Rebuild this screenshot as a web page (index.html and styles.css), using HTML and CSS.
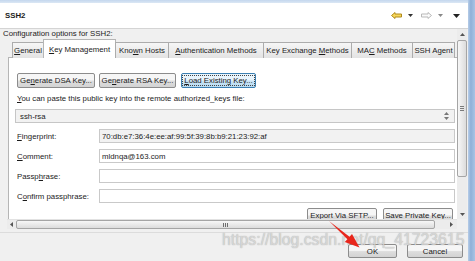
FILE: index.html
```html
<!DOCTYPE html>
<html>
	<head>
		<title>SSH2 preferences</title>
		<meta charset="utf-8">
		<link rel="stylesheet" href="styles.css">
	</head>
	<body>
		<div class="window">
			<div class="dialog">
				<div class="caption"></div>
				<div class="banner">
					<h1>SSH2</h1>
					<div class="nav">
						<svg class="back" width="11" height="7" viewBox="0 0 11 7"><polygon points="0.5,3.5 4,0.5 4,2 10.5,2 10.5,5 4,5 4,6.5" fill="#f6d75a" stroke="#b08a1c" stroke-width="1"/></svg>
						<svg class="caret" width="5" height="3" viewBox="0 0 5 3"><polygon points="0,0 5,0 2.5,3" fill="#333"/></svg>
						<svg class="fwd" width="11" height="7" viewBox="0 0 11 7"><polygon points="10.5,3.5 7,0.5 7,2 0.5,2 0.5,5 7,5 7,6.5" fill="#fafafa" stroke="#b9b9b9" stroke-width="1"/></svg>
						<svg class="caret" width="5" height="3" viewBox="0 0 5 3"><polygon points="0,0 5,0 2.5,3" fill="#888"/></svg>
						<svg class="menu" width="7" height="4" viewBox="0 0 7 4"><polygon points="0,0 7,0 3.5,4" fill="#222"/></svg>
					</div>
				</div>

				<div class="workarea">
					<div class="scroller">
						<div class="viewport">
							<p class="intro">Configuration options for SSH2:</p>
							<div class="tabfolder">
								<div class="tabs">
									<span class="tab"><span><u>G</u>eneral</span></span>
									<span class="tab active"><span><u>K</u>ey Management</span></span>
									<span class="tab"><span>Kno<u>w</u>n Hosts</span></span>
									<span class="tab"><span><u>A</u>uthentication Methods</span></span>
									<span class="tab"><span>Key Exchange <u>M</u>ethods</span></span>
									<span class="tab"><span>MA<u>C</u> Methods</span></span>
									<span class="tab"><span>SSH Agent</span></span>
								</div>
								<div class="panel">
									<div class="btnrow">
										<span class="btn dsa"><span>Ge<u>n</u>erate DSA Key...</span></span>
										<span class="btn rsa"><span>Ge<u>n</u>erate RSA Key...</span></span>
										<span class="btn load focused"><span><u>L</u>oad Existing Key...</span></span>
									</div>
									<p class="hint"><u>Y</u>ou can paste this public key into the remote authorized_keys file:</p>
									<div class="keybox">
										<span>ssh-rsa</span>
										<span class="spin">
											<svg width="5" height="3" viewBox="0 0 5 3"><polygon points="0,3 5,3 2.5,0" fill="#777"/></svg>
											<svg width="5" height="3" viewBox="0 0 5 3"><polygon points="0,0 5,0 2.5,3" fill="#777"/></svg>
										</span>
									</div>
									<div class="form">
										<label><u>F</u>ingerprint:</label>
										<div class="field ro">70:db:e7:36:4e:ee:af:99:5f:39:8b:b9:21:23:92:af</div>
										<label><u>C</u>omment:</label>
										<div class="field">mldnqa@163.com</div>
										<label>Passp<u>h</u>rase:</label>
										<div class="field"></div>
										<label>C<u>o</u>nfirm passphrase:</label>
										<div class="field"></div>
									</div>
									<div class="btnrow end">
										<span class="btn export"><span>Export Via SFTP...</span></span>
										<span class="btn save"><span>Save Private Key...</span></span>
									</div>
								</div>
							</div>
						</div>
						<div class="hscroll">
							<span class="arrow">
								<svg width="3" height="5" viewBox="0 0 3 5"><polygon points="3,0 3,5 0,2.5" fill="#555"/></svg>
							</span>
							<span class="thumb"><span class="grip"></span></span>
							<span class="track"></span>
							<span class="arrow">
								<svg width="3" height="5" viewBox="0 0 3 5"><polygon points="0,0 0,5 3,2.5" fill="#555"/></svg>
							</span>
						</div>
					</div>
					<div class="vscroll">
						<span class="arrow">
							<svg width="5" height="3" viewBox="0 0 5 3"><polygon points="0,3 5,3 2.5,0" fill="#555"/></svg>
						</span>
						<span class="thumb"><span class="grip"></span></span>
						<span class="track"></span>
						<span class="arrow">
							<svg width="5" height="3" viewBox="0 0 5 3"><polygon points="0,0 5,0 2.5,3" fill="#555"/></svg>
						</span>
						<span class="corner"></span>
					</div>
				</div>

				<div class="footer">
					<span class="btn ok">OK</span>
					<span class="btn cancel">Cancel</span>
				</div>
			</div>
			<div class="edge"></div>

			<div class="watermark">https://blog.csdn.net/qq_41723615</div>
			<svg class="pointer" width="50" height="40" viewBox="0 0 50 40">
				<polygon points="9,6 29.5,21.8 32,19 39.5,32.5 24.8,27 27.4,24.2" fill="#e8261c"/>
			</svg>
		</div>
	</body>
</html>
```

FILE: styles.css
```css
* {box-sizing: border-box;}
body {
	margin: 0;
	background: #f0f0f0;
	font-family: "Liberation Sans", Arial, sans-serif;
	font-size: 7.8px;
	color: #1b1b1b;
	overflow: hidden;
}
u {text-decoration-thickness: 1px; text-underline-offset: 1px;}
p {margin: 0;}

.window {position: relative; display: flex; width: 475px; height: 261px;}
.dialog {width: 468px; display: flex; flex-direction: column;}
.edge {width: 7px; background: linear-gradient(to right, #b7cde8, #8fb0d8 40%, #a9c4e4);}

.caption {height: 3px; background: linear-gradient(#c4d7ee, #dbe7f4);}

.banner {
	height: 26px;
	background: #fff;
	border-bottom: 1px solid #d4d4d4;
	display: flex;
	align-items: center;
	padding: 0 8px 0 5px;
}
.banner h1 {margin: 0; font-size: 7.8px; font-weight: 700;}
.nav {margin-left: auto; display: flex; align-items: center; gap: 6px;}
.nav .caret {margin-right: 2px;}
.nav .menu {margin-left: 2px;}

.workarea {height: 200px; display: flex;}
.scroller {width: 457px; display: flex; flex-direction: column;}
.viewport {height: 190px; overflow: hidden;}
.intro {line-height: 10px; padding-left: 3px;}

.tabfolder {margin-left: 8px;}
.tabs {display: flex; align-items: flex-end; padding-left: 4px; margin-bottom: -1px; position: relative; z-index: 1;}
.tab {
	height: 16px;
	margin-right: -1px;
	border: 1px solid #acacac;
	border-bottom: none;
	background: linear-gradient(#f6f6f6, #e3e3e3);
	display: flex;
	align-items: center;
	justify-content: center;
	white-space: nowrap;
}
.tab.active {height: 19px; background: #fff; border-color: #b5b5b5;}
.tab:nth-child(1) {width: 32px;}
.tab:nth-child(2) {width: 73px;}
.tab:nth-child(3) {width: 54px;}
.tab:nth-child(4) {width: 96px;}
.tab:nth-child(5) {width: 89px;}
.tab:nth-child(6) {width: 62px;}
.tab:nth-child(7) {width: 43px;}

.panel {
	width: 458px;
	height: 170px;
	background: #fff;
	border: 1px solid #b5b5b5;
	border-right: none;
	padding: 15px 11px 0 8px;
}

.btnrow {display: flex; gap: 4px;}
.btnrow.end {justify-content: flex-end; gap: 6px; padding-right: 2px; margin-top: 5px;}
.btn {
	height: 15px;
	border: 1px solid #8c8c8c;
	border-radius: 2px;
	background: linear-gradient(#f6f6f6 45%, #dddddd 55%, #d3d3d3);
	display: inline-flex;
	align-items: center;
	justify-content: center;
	white-space: nowrap;
}
.btn.dsa {width: 78px;}
.btn.rsa {width: 77px;}
.btn.load {width: 75px; margin-left: 1px;}
.btn.focused {border-color: #3c7fb1; background: linear-gradient(#e8f4fc 45%, #c9e4f6 55%, #b7dbf2); padding: 1px;}
.btn.focused span {outline: 1px dotted #444; padding: 0 1px;}
.btn.export, .btn.save {width: 70px;}

.hint {line-height: 10px; margin-top: 6px;}

.keybox {
	margin: 5px 0 0 -2px;
	height: 14px;
	border: 1px solid #c6c6c6;
	background: #f2f2f2;
	display: flex;
	align-items: center;
	padding-left: 4px;
}
.spin {margin-left: auto; margin-right: 5px; display: flex; flex-direction: column; gap: 2px;}

.form {
	display: grid;
	grid-template-columns: 82px 1fr;
	row-gap: 6px;
	margin-top: 6px;
	align-items: center;
}
.field {
	height: 14px;
	border: 1px solid #c9c9c9;
	background: #fff;
	padding-left: 2px;
	display: flex;
	align-items: center;
}
.field.ro {background: #f2f2f2;}

.hscroll {height: 10px; margin-left: 7px; display: flex; background: #ececec; border-top: 1px solid #e2e2e2;}
.hscroll .arrow {width: 9px; display: flex; align-items: center; justify-content: center;}
.hscroll .arrow:last-child {width: 11px;}
.hscroll .thumb {width: 419px;}
.hscroll .track {flex: 1;}
.thumb {
	border: 1px solid #a5a5a5;
	border-radius: 2px;
	background: linear-gradient(#f7f7f7, #dcdcdc);
	display: flex;
	align-items: center;
	justify-content: center;
}
.hscroll .grip {width: 5px; height: 4px; background: repeating-linear-gradient(to right, #6e6e6e 0 1px, transparent 1px 2px);}

.vscroll {width: 10px; display: flex; flex-direction: column; background: #ececec;}
.vscroll .arrow {height: 10px; display: flex; align-items: center; justify-content: center;}
.vscroll .thumb {height: 137px; margin-top: 1px; background: linear-gradient(to right, #f7f7f7, #dcdcdc);}
.vscroll .grip {width: 4px; height: 5px; background: repeating-linear-gradient(#7a7a7a 0 1px, transparent 1px 2px);}
.vscroll .track {flex: 1;}
.vscroll .corner {height: 10px; background: #f0f0f0;}

.footer {
	margin-top: 3px;
	border-top: 1px solid #dcdcdc;
	padding: 11px 5px 0 0;
	display: flex;
	justify-content: flex-end;
	gap: 10px;
}
.btn.ok {width: 49px; height: 14px;}
.btn.cancel {width: 56px; height: 14px;}

.watermark {
	position: absolute;
	left: 222px;
	top: 231px;
	font-size: 15.8px;
	line-height: 17px;
	color: rgba(225, 225, 225, 0.8);
	text-shadow: 0 0 1px rgba(80, 80, 80, 0.5);
	white-space: nowrap;
	pointer-events: none;
}
.pointer {position: absolute; left: 320px; top: 215px;}
```
